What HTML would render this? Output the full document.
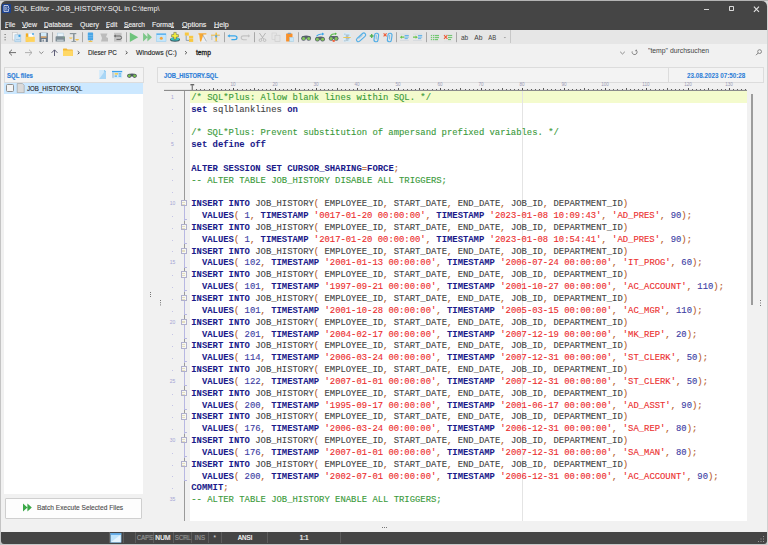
<!DOCTYPE html>
<html><head><meta charset="utf-8"><style>
*{margin:0;padding:0;box-sizing:border-box}
html,body{width:768px;height:545px;overflow:hidden}
body{position:relative;background:#f1f1f1;font-family:"Liberation Sans",sans-serif}
.a{position:absolute}
.dark{background:#454545}
.t{position:absolute;white-space:pre;line-height:10px}
.menu{position:absolute;top:19px;font-size:7.05px;color:#f0f0f0;white-space:pre;line-height:10px}
.menu u{text-decoration:none;border-bottom:0.8px solid #e8e8e8}
.ln{position:absolute;left:191.3px;height:11.84px;line-height:11.84px;font-family:"Liberation Mono",monospace;font-size:8.88px;color:#444444;white-space:pre;-webkit-text-stroke:0.12px currentColor}
.ln b{color:#1a1a8a;font-weight:bold;-webkit-text-stroke:0.05px currentColor}
.ln i{font-style:normal}
.ln .p{color:#b85c2c}
.ln .s{color:#ec2e2e}
.ln .n{color:#3e3ea4}
.ln .c{color:#3a9a3a}
.gn{position:absolute;left:163px;width:19px;text-align:center;height:11.84px;line-height:11.84px;font-size:5px;color:#a4a4d4}
.gd{position:absolute;left:172px;width:1px;height:1px;background:#c4c4e6}
.st{position:absolute;top:533px;font-size:6.3px;line-height:9px;white-space:pre;color:#8a8a8a}
.sep{position:absolute;top:532px;width:1px;height:11px;background:#5c5c5c}
</style></head><body>
<!-- outer frame -->
<div class="a" style="left:0;top:0;width:768px;height:545px;background:#d8d8d8"></div>
<div class="a" style="left:1px;top:1px;width:766px;height:544px;background:#f1f1f1;border-radius:5px 5px 0 0;overflow:hidden">
  <div class="a dark" style="left:0;top:0;width:766px;height:29px"></div>
</div>
<!-- title icon -->
<svg class="a" style="left:2px;top:4px" width="9" height="9" viewBox="0 0 9 9">
<rect x="0" y="0" width="9" height="9" rx="0.8" fill="#1b4190"/>
<path d="M2 1.5 H6 L6.4 2 V3.8 L7.3 4.5 L6.4 5.2 V7.4 H2Z" fill="none" stroke="#f4f6fb" stroke-width="0.75"/>
<path d="M3.3 3 H4.5 Q5.1 3 5.1 3.7 Q5.1 4.3 4.5 4.4 Q5.2 4.5 5.2 5.2 Q5.2 5.9 4.5 5.9 H3.3Z" fill="none" stroke="#dfe6f4" stroke-width="0.55"/>
</svg>
<div class="a" style="left:703.8px;top:8.8px;width:5px;height:1px;background:#d4d4d4"></div>
<div class="a" style="left:729.2px;top:6px;width:4.6px;height:5.4px;border:0.9px solid #dadada;border-radius:0.8px"></div>
<svg class="a" style="left:753px;top:5.5px" width="7" height="7" viewBox="0 0 7 7"><path d="M0.9 0.6 L6 5.9 M6 0.6 L0.9 5.9" stroke="#e4e4e4" stroke-width="1.1"/></svg>
<!-- toolbar -->
<div class="a" style="left:1px;top:30px;width:766px;height:14px;background:#e6e6e6"></div>
<svg class="a" style="left:0;top:28px" width="768" height="18" viewBox="0 28 768 18">
<g fill="#5a5a5a"><rect x="4.6" y="34" width="1" height="1"/><rect x="4.6" y="36.8" width="1" height="1"/><rect x="4.6" y="39.3" width="1" height="1"/></g>
<g fill="#a8a8a8"><rect x="52" y="32.2" width="1" height="10"/><rect x="82" y="32.2" width="1" height="10"/><rect x="126" y="32.2" width="1" height="10"/><rect x="224" y="32.2" width="1" height="10"/><rect x="254" y="32.2" width="1" height="10"/><rect x="298" y="32.2" width="1" height="10"/><rect x="396" y="32.2" width="1" height="10"/><rect x="426" y="32.2" width="1" height="10"/><rect x="456" y="32.2" width="1" height="10"/><rect x="510" y="30" width="1" height="13" fill="#c8c8c8"/></g>
<!-- copy doc -->
<rect x="12.6" y="32.6" width="4.6" height="7.4" fill="#f6f6f6" stroke="#c4c4c4" stroke-width="0.6"/>
<rect x="14.9" y="34.8" width="5.9" height="7" fill="#cde5f6" stroke="#98c2e2" stroke-width="0.6"/>
<circle cx="19.4" cy="35.9" r="1.1" fill="#3b9fe0"/>
<rect x="16" y="39.5" width="3.8" height="0.6" fill="#8ab4d4"/>
<!-- folder -->
<path d="M25.8 33.4 H28.4 V41.9 H25.8Z" fill="#f3ad22"/>
<rect x="28.6" y="33.3" width="4.9" height="4.6" fill="#fbfdff" stroke="#c8dcee" stroke-width="0.4"/>
<circle cx="33" cy="34" r="0.9" fill="#3b9fe0"/>
<path d="M25.8 36.8 H34.8 V41.9 H25.8Z" fill="#ffd35c"/>
<!-- disk -->
<rect x="39.5" y="32.8" width="8.4" height="9.1" rx="0.5" fill="#687888"/>
<rect x="40.9" y="32.8" width="5.6" height="3.8" fill="#d2eaf8"/>
<rect x="40.9" y="36.4" width="5.6" height="1.4" fill="#e3a867"/>
<rect x="41.6" y="39" width="4.2" height="2.9" fill="#e6e6e6"/>
<rect x="42.6" y="39.6" width="1.2" height="2" fill="#687888"/>
<!-- printer -->
<rect x="57.6" y="33.1" width="5.6" height="4" fill="#e8f4fb" stroke="#a8c8dc" stroke-width="0.5"/>
<path d="M55.6 37 Q55.6 36.3 56.4 36.3 H64.2 Q65 36.3 65 37 V41.6 H55.6Z" fill="#7d8c94"/>
<rect x="57" y="39.6" width="6.6" height="1.6" fill="#b8c4ca"/>
<rect x="63.6" y="37.2" width="0.8" height="0.8" fill="#7bc86c"/>
<!-- scales -->
<rect x="69.8" y="33" width="6.5" height="1.2" fill="#8a969c"/>
<rect x="73" y="33" width="1.6" height="8.6" fill="#8a969c"/>
<rect x="71.5" y="41" width="4.6" height="0.8" fill="#8a969c"/>
<path d="M69 37.4 H72.6 Q72.3 38.8 70.8 38.8 Q69.3 38.8 69 37.4Z" fill="#f2c24a"/>
<path d="M75.2 39 H79 Q78.7 40.5 77.1 40.5 Q75.5 40.5 75.2 39Z" fill="#f2c24a"/>
<!-- db -->
<rect x="87.8" y="32.5" width="5.3" height="7.7" rx="0.6" fill="#4aa6e6"/>
<rect x="88.2" y="35.2" width="4.5" height="0.5" fill="#8fcaf2"/>
<rect x="88.2" y="37.6" width="4.5" height="0.5" fill="#8fcaf2"/>
<rect x="90.2" y="40" width="0.6" height="1" fill="#999"/>
<rect x="88.6" y="40.8" width="3.8" height="1.2" fill="#f0c04a"/>
<!-- disabled 1 -->
<path d="M100.3 33.5 H107.5 L106 37 L108 38 V41.5 H101 L102 38 Z" fill="#bcbcbc"/>
<!-- disabled 2 -->
<rect x="114" y="32.8" width="7.6" height="8.8" fill="#c4c4c4"/>
<path d="M115.5 36 H120 Q121.6 36 121.6 37.6 Q121.6 39.4 120 39.4 H116.5" fill="none" stroke="#666" stroke-width="1"/>
<path d="M113.6 36 L115.8 34.6 V37.4Z" fill="#666"/>
<!-- play -->
<path d="M129.8 32.5 L138.2 37.2 L129.8 41.9Z" fill="#6ec47c"/>
<!-- double play -->
<path d="M143.1 32.8 L147.6 37.2 L143.1 41.6Z M147.4 32.8 L151.9 37.2 L147.4 41.6Z" fill="#7cc788"/>
<!-- window -->
<rect x="156.6" y="33.8" width="9.4" height="7.5" fill="#c4e6fb" stroke="#8ccaf2" stroke-width="0.5"/>
<rect x="156.6" y="33.6" width="9.4" height="1.2" fill="#4aa8ec"/>
<circle cx="161.3" cy="38.3" r="1.5" fill="#f6a43a"/>
<!-- teal + star -->
<ellipse cx="175" cy="39.6" rx="5" ry="2.2" fill="#3a5a60"/>
<ellipse cx="175" cy="39.1" rx="4.3" ry="1.5" fill="#36c4c8"/>
<path d="M173.8 32.4 H176.2 V34.6 H178.4 V37 H176.2 V39.2 H173.8 V37 H171.6 V34.6 H173.8Z" fill="#f4f040" stroke="#4a4a3a" stroke-width="0.45"/>
<!-- tree -->
<rect x="184.8" y="32.5" width="4" height="3.1" fill="#f8c840"/>
<path d="M186.2 35.6 V40.4 H189" fill="none" stroke="#8a9aa6" stroke-width="0.9"/>
<rect x="189" y="35.8" width="4.2" height="2.8" fill="#f8c840"/>
<rect x="189" y="39" width="4.2" height="2.9" fill="#f8c840"/>
<!-- orange doc -->
<rect x="198.4" y="33.2" width="8.2" height="8.8" fill="#eceff2"/>
<path d="M198.4 33.2 H206.4 V34.6 H203.4 L201.2 41.6 H200 L199.2 34.6 H198.4Z" fill="#f8a830"/>
<path d="M202.6 34.6 L206.4 41.4" stroke="#8c98a4" stroke-width="0.7"/>
<!-- crane -->
<rect x="215.4" y="32.6" width="1.6" height="9.2" fill="#f2c24a"/>
<rect x="211" y="34.7" width="8.8" height="1" fill="#e8b840"/>
<rect x="215.2" y="35.2" width="2" height="2.2" fill="#5aa8d8"/>
<rect x="211.6" y="36" width="0.6" height="4" fill="#9aa"/>
<rect x="213.8" y="41.2" width="4.6" height="0.7" fill="#ccc"/>
<!-- undo -->
<path d="M228.6 35.9 H234.6 Q237 35.9 237 37.8 Q237 39.7 234.6 39.7 H231.4" fill="none" stroke="#3aa8ea" stroke-width="1.2"/>
<path d="M227.4 35.9 L229.8 34.2 V37.6Z" fill="#3aa8ea"/>
<!-- redo -->
<path d="M249 35.9 H243.6 Q241.2 35.9 241.2 37.8 Q241.2 39.7 243.6 39.7 H246.8" fill="none" stroke="#c2c2c2" stroke-width="1.1"/>
<path d="M250.3 35.9 L248 34.2 V37.6Z" fill="#c2c2c2"/>
<!-- scissors -->
<path d="M259.4 33 L263.6 39 M265.6 33 L261.4 39" stroke="#b0b0b0" stroke-width="0.9"/>
<circle cx="260.4" cy="40.2" r="1.3" fill="none" stroke="#b0b0b0" stroke-width="0.7"/>
<circle cx="264.6" cy="40.2" r="1.3" fill="none" stroke="#b0b0b0" stroke-width="0.7"/>
<!-- copy disabled -->
<rect x="272" y="33" width="4.5" height="6.6" fill="none" stroke="#cfcfcf" stroke-width="0.6"/>
<rect x="275" y="35.2" width="5" height="6.4" fill="#e4e4e4" stroke="#c8c8c8" stroke-width="0.6"/>
<!-- paste -->
<rect x="286.1" y="33.6" width="6.4" height="8" rx="0.5" fill="#f8902a"/>
<rect x="287.6" y="32.8" width="3.4" height="1.3" rx="0.5" fill="#8aa0b0"/>
<rect x="289.6" y="37.2" width="4" height="4.6" fill="#cbe8f8" stroke="#9cc8e4" stroke-width="0.4"/>
<!-- binoculars -->
<path d="M302.4 36.2 Q306 34.6 310 36.2 L311 38.6 H301.2Z" fill="#58606a"/>
<circle cx="303.6" cy="38.4" r="2.3" fill="#56606a"/><circle cx="308.7" cy="38.4" r="2.3" fill="#56606a"/>
<circle cx="303.6" cy="38.4" r="1.5" fill="#84c85a"/><circle cx="308.7" cy="38.4" r="1.5" fill="#84c85a"/>
<!-- binoculars blue arrow -->
<path d="M316.2 37.2 L318.6 36.8 Q322.8 36.2 323.6 37.6 L325 39.6 H315Z" fill="#58606a"/>
<circle cx="317.4" cy="39.3" r="2.3" fill="#56606a"/><circle cx="322.6" cy="39.3" r="2.3" fill="#56606a"/>
<circle cx="317.4" cy="39.3" r="1.5" fill="#84c85a"/><circle cx="322.6" cy="39.3" r="1.5" fill="#84c85a"/>
<path d="M316.6 36.4 Q318 34 322.4 34" fill="none" stroke="#3aa6e8" stroke-width="1.1"/>
<path d="M324.4 34 L322 32.6 V35.4Z" fill="#3aa6e8"/>
<!-- binoculars green/red -->
<path d="M329.6 36.8 Q333.4 35.4 337.4 36.8 L338.2 39 H328.6Z" fill="#58606a"/>
<circle cx="331.2" cy="38.4" r="2.3" fill="#56606a"/><circle cx="336.2" cy="38.4" r="2.3" fill="#56606a"/>
<circle cx="331.2" cy="38.4" r="1.5" fill="#84c85a"/><circle cx="336.2" cy="38.4" r="1.5" fill="#84c85a"/>
<path d="M330.4 36 Q331.6 33.8 335.6 33.8" fill="none" stroke="#5cbb4c" stroke-width="1.1"/>
<path d="M337 33.8 L335 32.4 V35.2Z" fill="#5cbb4c"/>
<path d="M332 40.6 L335.4 40.6 L333.7 42Z" fill="#f0643c"/><rect x="332.6" y="40" width="2.2" height="1.6" fill="#f0643c"/>
<!-- doc yellow line -->
<rect x="343.3" y="32.8" width="7.4" height="9" fill="#d6ecf8"/>
<g fill="#6a7a8a"><rect x="344.4" y="33.8" width="1" height="0.6"/><rect x="345.8" y="34.8" width="3.6" height="0.5"/><rect x="345.8" y="35.9" width="2.6" height="0.5"/><rect x="345.8" y="38.6" width="3.6" height="0.5"/><rect x="345.8" y="39.8" width="2.6" height="0.5"/><rect x="344.4" y="40.6" width="1" height="0.6"/></g>
<rect x="343.3" y="37" width="7.4" height="0.9" fill="#f0c040"/>
<!-- paperclip -->
<rect x="355.6" y="35.5" width="11" height="3.8" rx="1.9" transform="rotate(-42 361 37.4)" fill="none" stroke="#52aee6" stroke-width="1.15"/>
<path d="M358.6 38.6 L362.6 35" stroke="#52aee6" stroke-width="0.7"/>
<!-- green + clip -->
<path d="M369.8 36 H373.6 M371.7 34 V38" stroke="#52b052" stroke-width="1.3"/>
<rect x="374.3" y="33.2" width="4" height="8.6" rx="2" transform="rotate(8 376.3 37.5)" fill="none" stroke="#52aee6" stroke-width="1.15"/>
<path d="M376.2 34.8 V39.4" stroke="#52aee6" stroke-width="0.7"/>
<!-- red x clip -->
<path d="M383.6 33.3 L386.6 36.3 M386.6 33.3 L383.6 36.3" stroke="#ec5a36" stroke-width="1.1"/>
<rect x="387.7" y="33.2" width="4" height="8.6" rx="2" transform="rotate(8 389.7 37.5)" fill="none" stroke="#52aee6" stroke-width="1.15"/>
<path d="M389.6 34.8 V39.4" stroke="#52aee6" stroke-width="0.7"/>
<!-- indent -->
<g fill="#c8d0d8"><rect x="400" y="33.8" width="8.8" height="0.5"/><rect x="400" y="40.4" width="8.8" height="0.5"/></g>
<path d="M399.8 37.2 L402 35.6 V36.6 H404.4 V37.8 H402 V38.8Z" fill="#6cc44c"/>
<g fill="#58b0ea"><rect x="404.6" y="35" width="4.2" height="0.9"/><rect x="404.6" y="36.6" width="4.2" height="0.9"/><rect x="404.6" y="38.2" width="3.2" height="0.9"/></g>
<!-- outdent -->
<g fill="#c8d0d8"><rect x="413" y="33.8" width="9" height="0.5"/><rect x="413" y="40.4" width="9" height="0.5"/></g>
<path d="M417.8 37.2 L415.6 35.6 V36.6 H413 V37.8 H415.6 V38.8Z" fill="#6cc44c"/>
<g fill="#58b0ea"><rect x="418" y="35" width="4.2" height="0.9"/><rect x="418" y="36.6" width="4.2" height="0.9"/><rect x="418" y="38.2" width="3.2" height="0.9"/></g>
<!-- green list -->
<g fill="#72c872"><rect x="430.8" y="35" width="1.4" height="1.2"/><rect x="433" y="35" width="1.4" height="1.2"/><rect x="435" y="35" width="4" height="1.2"/><rect x="430.8" y="37" width="1.4" height="1.2"/><rect x="433" y="37" width="1.4" height="1.2"/><rect x="435" y="37" width="4" height="1.2"/><rect x="430.8" y="39" width="1.4" height="1.2"/><rect x="433" y="39" width="1.4" height="1.2"/><rect x="435" y="39" width="3" height="1.2"/></g>
<g fill="#d0d4d8"><rect x="430.8" y="34" width="8.3" height="0.4"/><rect x="430.8" y="40.8" width="8.3" height="0.4"/></g>
<!-- red x list -->
<path d="M444 35.2 L447.4 38.8 M447.4 35.2 L444 38.8" stroke="#ec5a36" stroke-width="1.1"/>
<g fill="#72c872"><rect x="448" y="35" width="4.2" height="1.1"/><rect x="448" y="37" width="4.2" height="1.1"/><rect x="448" y="39" width="3" height="1.1"/></g>
<g fill="#d0d4d8"><rect x="443.8" y="34" width="8.4" height="0.4"/><rect x="443.8" y="40.8" width="8.4" height="0.4"/></g>
<!-- ab Ab AB -->
<g font-family="Liberation Sans" font-size="7.2" fill="#404040">
<text x="460.9" y="39.5" textLength="7.2" lengthAdjust="spacingAndGlyphs">ab</text>
<text x="474.3" y="39.5" textLength="8.2" lengthAdjust="spacingAndGlyphs">Ab</text>
<text x="488.3" y="39.5" textLength="7.9" lengthAdjust="spacingAndGlyphs">AB</text>
</g>
<path d="M503.7 37 H506.1 L504.9 38.2Z" fill="#9a9a9a"/>
</svg>

<!-- address bar -->
<svg class="a" style="left:0;top:44px" width="230" height="18" viewBox="0 44 230 18">
<path d="M9 52.6 H16 M12 49.7 L9 52.6 L12 55.5" fill="none" stroke="#5c5c5c" stroke-width="0.9"/>
<path d="M32 52.6 H25 M29 49.7 L32 52.6 L29 55.5" fill="none" stroke="#a8a8a8" stroke-width="0.9"/>
<path d="M39.2 51.6 L41.3 53.6 L43.4 51.6" fill="none" stroke="#707070" stroke-width="0.8"/>
<path d="M54.5 56 V50 M51.6 52.8 L54.5 49.8 L57.4 52.8" fill="none" stroke="#4e4e6a" stroke-width="0.9"/>
<path d="M63 49 Q63 48.4 63.6 48.4 H66.6 L67.6 49.4 H72.2 Q72.8 49.4 72.8 50 V55.4 Q72.8 56 72.2 56 H63.6 Q63 56 63 55.4Z" fill="#f2b632"/>
<path d="M63 50.6 H72.8 V55.4 Q72.8 56 72.2 56 H63.6 Q63 56 63 55.4Z" fill="#ffd866"/>
<path d="M77.7 51.2 L79.4 52.7 L77.7 54.2" fill="none" stroke="#555" stroke-width="1"/>
<path d="M125.7 51.2 L127.4 52.7 L125.7 54.2" fill="none" stroke="#555" stroke-width="1"/>
<path d="M185.1 51.2 L186.8 52.7 L185.1 54.2" fill="none" stroke="#555" stroke-width="1"/>
</svg>
<svg class="a" style="left:615px;top:44px" width="153" height="18" viewBox="615 44 153 18">
<path d="M620.2 51.8 L622.5 54 L624.8 51.8" fill="none" stroke="#707070" stroke-width="0.8"/>
<path d="M636.6 50.6 A2.5 2.5 0 1 1 632.2 51.4" fill="none" stroke="#707070" stroke-width="0.8"/>
<path d="M636.2 49.2 L637 51 L635 51.2Z" fill="#707070"/>
<circle cx="759.6" cy="51.6" r="1.9" fill="none" stroke="#707070" stroke-width="0.8"/>
<path d="M758.2 53 L756 55.2" stroke="#707070" stroke-width="0.9"/>
</svg>
<!-- left panel -->
<div class="a" style="left:4px;top:67px;width:140px;height:16px;background:#f3f3f3;border:1px solid #dcdcdc"></div>
<svg class="a" style="left:96px;top:68px" width="46" height="13" viewBox="96 68 46 13">
<path d="M99.2 70 H104.4 L106 71.6 V79 H99.2Z" fill="#d2eafb"/>
<path d="M99.2 79 L104.6 71.6 H106 V79Z" fill="#a8d6f6"/>
<path d="M104.4 70 L106 71.6 H104.4Z" fill="#4aa6e6"/>
<rect x="112" y="71" width="10.2" height="7.3" fill="#d4ecfb"/>
<rect x="112" y="70.9" width="10.2" height="1.3" fill="#3ea2ea"/>
<rect x="114.6" y="73.2" width="3.4" height="1.4" fill="#f6c83c"/>
<rect x="118.6" y="73.2" width="2.6" height="1.4" fill="#60b4ee"/>
<rect x="114.6" y="75.4" width="2.4" height="1.4" fill="#60b4ee"/><rect x="118.6" y="75.4" width="2.6" height="1.4" fill="#60b4ee"/>
<rect x="112.6" y="72.6" width="0.8" height="5.2" fill="#9aa8b4"/>
<path d="M128 74.6 Q132 72.4 136 74.6 L136.8 76.4 H127.2Z" fill="#4e5864"/>
<circle cx="129.3" cy="75.8" r="2.1" fill="#4e5864"/><circle cx="134.6" cy="75.8" r="2.1" fill="#4e5864"/>
<circle cx="129.3" cy="75.8" r="1.4" fill="#78c24c"/><circle cx="134.6" cy="75.8" r="1.4" fill="#78c24c"/>
</svg>
<div class="a" style="left:4px;top:83px;width:139px;height:411px;background:#fff"></div>
<div class="a" style="left:4px;top:83px;width:139px;height:11px;background:#cce8ff"></div>
<div class="a" style="left:6.3px;top:84.2px;width:7.5px;height:7.4px;background:#f4f4f4;border:1px solid #8e8e8e;border-radius:1.5px"></div>
<svg class="a" style="left:16px;top:83px" width="9" height="10" viewBox="16 83 9 10">
<path d="M17.2 83.5 H22.4 L24.2 85.3 V92.7 H17.2Z" fill="#dadada" stroke="#9a9a9a" stroke-width="0.6"/>
</svg>
<div class="a" style="left:4.8px;top:497.8px;width:137.2px;height:20.8px;background:#fdfdfd;border:1px solid #cfcfcf;border-radius:1px"></div>
<svg class="a" style="left:22px;top:502px" width="11" height="11" viewBox="22 502 11 11">
<path d="M23 503.4 L27.4 507.5 L23 511.6Z M27.4 503.4 L31.8 507.5 L27.4 511.6Z" fill="#3aa848"/>
</svg>
<!-- splitter grips -->
<div class="a" style="left:149.5px;top:291.5px;width:1px;height:1px;background:#777;box-shadow:0 2px #777,0 4px #777"></div>
<div class="a" style="left:160px;top:299.5px;width:1px;height:1px;background:#777;box-shadow:0 2.2px #777,0 4.4px #777"></div>
<!-- editor header -->
<div class="a" style="left:156.6px;top:67px;width:607.4px;height:16px;background:#f3f3f3;border:1px solid #dcdcdc"></div>
<div class="a" style="left:668px;top:67px;width:1px;height:16px;background:#dcdcdc"></div>
<!-- ruler -->
<div class="a" style="left:164px;top:90px;width:583px;height:1px;background:#8c8c8c"></div>
<div class="a" style="left:164px;top:89px;width:583px;height:1px;background:#e4e4e4"></div>
<div class="a" style="left:195.5px;top:88.8px;width:1px;height:1.3px;background:#606060"></div>
<div class="a" style="left:199.5px;top:88.8px;width:1px;height:1.3px;background:#606060"></div>
<div class="a" style="left:203.5px;top:88.8px;width:1px;height:1.3px;background:#606060"></div>
<div class="a" style="left:208.5px;top:88.8px;width:1px;height:1.3px;background:#606060"></div>
<div class="a" style="left:212.5px;top:87.8px;width:1px;height:2.3px;background:#606060"></div>
<div class="a" style="left:216.5px;top:88.8px;width:1px;height:1.3px;background:#606060"></div>
<div class="a" style="left:220.5px;top:88.8px;width:1px;height:1.3px;background:#606060"></div>
<div class="a" style="left:224.5px;top:88.8px;width:1px;height:1.3px;background:#606060"></div>
<div class="a" style="left:228.5px;top:88.8px;width:1px;height:1.3px;background:#606060"></div>
<div class="a" style="left:232.5px;top:87.6px;width:1px;height:2.5px;background:#505050"></div>
<div class="t" style="left:224.5px;top:82.2px;width:17px;text-align:center;font-size:4.6px;line-height:6px;color:#9a9ab4">10</div>
<div class="a" style="left:236.5px;top:88.8px;width:1px;height:1.3px;background:#606060"></div>
<div class="a" style="left:241.5px;top:88.8px;width:1px;height:1.3px;background:#606060"></div>
<div class="a" style="left:245.5px;top:88.8px;width:1px;height:1.3px;background:#606060"></div>
<div class="a" style="left:249.5px;top:88.8px;width:1px;height:1.3px;background:#606060"></div>
<div class="a" style="left:253.5px;top:87.8px;width:1px;height:2.3px;background:#606060"></div>
<div class="a" style="left:257.5px;top:88.8px;width:1px;height:1.3px;background:#606060"></div>
<div class="a" style="left:261.5px;top:88.8px;width:1px;height:1.3px;background:#606060"></div>
<div class="a" style="left:265.5px;top:88.8px;width:1px;height:1.3px;background:#606060"></div>
<div class="a" style="left:269.5px;top:88.8px;width:1px;height:1.3px;background:#606060"></div>
<div class="a" style="left:274.5px;top:87.6px;width:1px;height:2.5px;background:#505050"></div>
<div class="t" style="left:266.5px;top:82.2px;width:17px;text-align:center;font-size:4.6px;line-height:6px;color:#9a9ab4">20</div>
<div class="a" style="left:278.5px;top:88.8px;width:1px;height:1.3px;background:#606060"></div>
<div class="a" style="left:282.5px;top:88.8px;width:1px;height:1.3px;background:#606060"></div>
<div class="a" style="left:286.5px;top:88.8px;width:1px;height:1.3px;background:#606060"></div>
<div class="a" style="left:290.5px;top:88.8px;width:1px;height:1.3px;background:#606060"></div>
<div class="a" style="left:294.5px;top:87.8px;width:1px;height:2.3px;background:#606060"></div>
<div class="a" style="left:298.5px;top:88.8px;width:1px;height:1.3px;background:#606060"></div>
<div class="a" style="left:303.5px;top:88.8px;width:1px;height:1.3px;background:#606060"></div>
<div class="a" style="left:307.5px;top:88.8px;width:1px;height:1.3px;background:#606060"></div>
<div class="a" style="left:311.5px;top:88.8px;width:1px;height:1.3px;background:#606060"></div>
<div class="a" style="left:315.5px;top:87.6px;width:1px;height:2.5px;background:#505050"></div>
<div class="t" style="left:307.5px;top:82.2px;width:17px;text-align:center;font-size:4.6px;line-height:6px;color:#9a9ab4">30</div>
<div class="a" style="left:319.5px;top:88.8px;width:1px;height:1.3px;background:#606060"></div>
<div class="a" style="left:323.5px;top:88.8px;width:1px;height:1.3px;background:#606060"></div>
<div class="a" style="left:327.5px;top:88.8px;width:1px;height:1.3px;background:#606060"></div>
<div class="a" style="left:331.5px;top:88.8px;width:1px;height:1.3px;background:#606060"></div>
<div class="a" style="left:336.5px;top:87.8px;width:1px;height:2.3px;background:#606060"></div>
<div class="a" style="left:340.5px;top:88.8px;width:1px;height:1.3px;background:#606060"></div>
<div class="a" style="left:344.5px;top:88.8px;width:1px;height:1.3px;background:#606060"></div>
<div class="a" style="left:348.5px;top:88.8px;width:1px;height:1.3px;background:#606060"></div>
<div class="a" style="left:352.5px;top:88.8px;width:1px;height:1.3px;background:#606060"></div>
<div class="a" style="left:356.5px;top:87.6px;width:1px;height:2.5px;background:#505050"></div>
<div class="t" style="left:348.5px;top:82.2px;width:17px;text-align:center;font-size:4.6px;line-height:6px;color:#9a9ab4">40</div>
<div class="a" style="left:360.5px;top:88.8px;width:1px;height:1.3px;background:#606060"></div>
<div class="a" style="left:364.5px;top:88.8px;width:1px;height:1.3px;background:#606060"></div>
<div class="a" style="left:369.5px;top:88.8px;width:1px;height:1.3px;background:#606060"></div>
<div class="a" style="left:373.5px;top:88.8px;width:1px;height:1.3px;background:#606060"></div>
<div class="a" style="left:377.5px;top:87.8px;width:1px;height:2.3px;background:#606060"></div>
<div class="a" style="left:381.5px;top:88.8px;width:1px;height:1.3px;background:#606060"></div>
<div class="a" style="left:385.5px;top:88.8px;width:1px;height:1.3px;background:#606060"></div>
<div class="a" style="left:389.5px;top:88.8px;width:1px;height:1.3px;background:#606060"></div>
<div class="a" style="left:393.5px;top:88.8px;width:1px;height:1.3px;background:#606060"></div>
<div class="a" style="left:397.5px;top:87.6px;width:1px;height:2.5px;background:#505050"></div>
<div class="t" style="left:389.5px;top:82.2px;width:17px;text-align:center;font-size:4.6px;line-height:6px;color:#9a9ab4">50</div>
<div class="a" style="left:402.5px;top:88.8px;width:1px;height:1.3px;background:#606060"></div>
<div class="a" style="left:406.5px;top:88.8px;width:1px;height:1.3px;background:#606060"></div>
<div class="a" style="left:410.5px;top:88.8px;width:1px;height:1.3px;background:#606060"></div>
<div class="a" style="left:414.5px;top:88.8px;width:1px;height:1.3px;background:#606060"></div>
<div class="a" style="left:418.5px;top:87.8px;width:1px;height:2.3px;background:#606060"></div>
<div class="a" style="left:422.5px;top:88.8px;width:1px;height:1.3px;background:#606060"></div>
<div class="a" style="left:426.5px;top:88.8px;width:1px;height:1.3px;background:#606060"></div>
<div class="a" style="left:431.5px;top:88.8px;width:1px;height:1.3px;background:#606060"></div>
<div class="a" style="left:435.5px;top:88.8px;width:1px;height:1.3px;background:#606060"></div>
<div class="a" style="left:439.5px;top:87.6px;width:1px;height:2.5px;background:#505050"></div>
<div class="t" style="left:431.5px;top:82.2px;width:17px;text-align:center;font-size:4.6px;line-height:6px;color:#9a9ab4">60</div>
<div class="a" style="left:443.5px;top:88.8px;width:1px;height:1.3px;background:#606060"></div>
<div class="a" style="left:447.5px;top:88.8px;width:1px;height:1.3px;background:#606060"></div>
<div class="a" style="left:451.5px;top:88.8px;width:1px;height:1.3px;background:#606060"></div>
<div class="a" style="left:455.5px;top:88.8px;width:1px;height:1.3px;background:#606060"></div>
<div class="a" style="left:459.5px;top:87.8px;width:1px;height:2.3px;background:#606060"></div>
<div class="a" style="left:464.5px;top:88.8px;width:1px;height:1.3px;background:#606060"></div>
<div class="a" style="left:468.5px;top:88.8px;width:1px;height:1.3px;background:#606060"></div>
<div class="a" style="left:472.5px;top:88.8px;width:1px;height:1.3px;background:#606060"></div>
<div class="a" style="left:476.5px;top:88.8px;width:1px;height:1.3px;background:#606060"></div>
<div class="a" style="left:480.5px;top:87.6px;width:1px;height:2.5px;background:#505050"></div>
<div class="t" style="left:472.5px;top:82.2px;width:17px;text-align:center;font-size:4.6px;line-height:6px;color:#9a9ab4">70</div>
<div class="a" style="left:484.5px;top:88.8px;width:1px;height:1.3px;background:#606060"></div>
<div class="a" style="left:488.5px;top:88.8px;width:1px;height:1.3px;background:#606060"></div>
<div class="a" style="left:492.5px;top:88.8px;width:1px;height:1.3px;background:#606060"></div>
<div class="a" style="left:497.5px;top:88.8px;width:1px;height:1.3px;background:#606060"></div>
<div class="a" style="left:501.5px;top:87.8px;width:1px;height:2.3px;background:#606060"></div>
<div class="a" style="left:505.5px;top:88.8px;width:1px;height:1.3px;background:#606060"></div>
<div class="a" style="left:509.5px;top:88.8px;width:1px;height:1.3px;background:#606060"></div>
<div class="a" style="left:513.5px;top:88.8px;width:1px;height:1.3px;background:#606060"></div>
<div class="a" style="left:517.5px;top:88.8px;width:1px;height:1.3px;background:#606060"></div>
<div class="a" style="left:521.5px;top:87.6px;width:1px;height:2.5px;background:#505050"></div>
<div class="t" style="left:513.5px;top:82.2px;width:17px;text-align:center;font-size:4.6px;line-height:6px;color:#9a9ab4">80</div>
<div class="a" style="left:526.5px;top:88.8px;width:1px;height:1.3px;background:#606060"></div>
<div class="a" style="left:530.5px;top:88.8px;width:1px;height:1.3px;background:#606060"></div>
<div class="a" style="left:534.5px;top:88.8px;width:1px;height:1.3px;background:#606060"></div>
<div class="a" style="left:538.5px;top:88.8px;width:1px;height:1.3px;background:#606060"></div>
<div class="a" style="left:542.5px;top:87.8px;width:1px;height:2.3px;background:#606060"></div>
<div class="a" style="left:546.5px;top:88.8px;width:1px;height:1.3px;background:#606060"></div>
<div class="a" style="left:550.5px;top:88.8px;width:1px;height:1.3px;background:#606060"></div>
<div class="a" style="left:554.5px;top:88.8px;width:1px;height:1.3px;background:#606060"></div>
<div class="a" style="left:559.5px;top:88.8px;width:1px;height:1.3px;background:#606060"></div>
<div class="a" style="left:563.5px;top:87.6px;width:1px;height:2.5px;background:#505050"></div>
<div class="t" style="left:555.5px;top:82.2px;width:17px;text-align:center;font-size:4.6px;line-height:6px;color:#9a9ab4">90</div>
<div class="a" style="left:567.5px;top:88.8px;width:1px;height:1.3px;background:#606060"></div>
<div class="a" style="left:571.5px;top:88.8px;width:1px;height:1.3px;background:#606060"></div>
<div class="a" style="left:575.5px;top:88.8px;width:1px;height:1.3px;background:#606060"></div>
<div class="a" style="left:579.5px;top:88.8px;width:1px;height:1.3px;background:#606060"></div>
<div class="a" style="left:583.5px;top:87.8px;width:1px;height:2.3px;background:#606060"></div>
<div class="a" style="left:587.5px;top:88.8px;width:1px;height:1.3px;background:#606060"></div>
<div class="a" style="left:592.5px;top:88.8px;width:1px;height:1.3px;background:#606060"></div>
<div class="a" style="left:596.5px;top:88.8px;width:1px;height:1.3px;background:#606060"></div>
<div class="a" style="left:600.5px;top:88.8px;width:1px;height:1.3px;background:#606060"></div>
<div class="a" style="left:604.5px;top:87.6px;width:1px;height:2.5px;background:#505050"></div>
<div class="t" style="left:596.5px;top:82.2px;width:17px;text-align:center;font-size:4.6px;line-height:6px;color:#9a9ab4">100</div>
<div class="a" style="left:608.5px;top:88.8px;width:1px;height:1.3px;background:#606060"></div>
<div class="a" style="left:612.5px;top:88.8px;width:1px;height:1.3px;background:#606060"></div>
<div class="a" style="left:616.5px;top:88.8px;width:1px;height:1.3px;background:#606060"></div>
<div class="a" style="left:621.5px;top:88.8px;width:1px;height:1.3px;background:#606060"></div>
<div class="a" style="left:625.5px;top:87.8px;width:1px;height:2.3px;background:#606060"></div>
<div class="a" style="left:629.5px;top:88.8px;width:1px;height:1.3px;background:#606060"></div>
<div class="a" style="left:633.5px;top:88.8px;width:1px;height:1.3px;background:#606060"></div>
<div class="a" style="left:637.5px;top:88.8px;width:1px;height:1.3px;background:#606060"></div>
<div class="a" style="left:641.5px;top:88.8px;width:1px;height:1.3px;background:#606060"></div>
<div class="a" style="left:645.5px;top:87.6px;width:1px;height:2.5px;background:#505050"></div>
<div class="t" style="left:637.5px;top:82.2px;width:17px;text-align:center;font-size:4.6px;line-height:6px;color:#9a9ab4">110</div>
<div class="a" style="left:649.5px;top:88.8px;width:1px;height:1.3px;background:#606060"></div>
<div class="a" style="left:654.5px;top:88.8px;width:1px;height:1.3px;background:#606060"></div>
<div class="a" style="left:658.5px;top:88.8px;width:1px;height:1.3px;background:#606060"></div>
<div class="a" style="left:662.5px;top:88.8px;width:1px;height:1.3px;background:#606060"></div>
<div class="a" style="left:666.5px;top:87.8px;width:1px;height:2.3px;background:#606060"></div>
<div class="a" style="left:670.5px;top:88.8px;width:1px;height:1.3px;background:#606060"></div>
<div class="a" style="left:674.5px;top:88.8px;width:1px;height:1.3px;background:#606060"></div>
<div class="a" style="left:678.5px;top:88.8px;width:1px;height:1.3px;background:#606060"></div>
<div class="a" style="left:682.5px;top:88.8px;width:1px;height:1.3px;background:#606060"></div>
<div class="a" style="left:687.5px;top:87.6px;width:1px;height:2.5px;background:#505050"></div>
<div class="t" style="left:679.5px;top:82.2px;width:17px;text-align:center;font-size:4.6px;line-height:6px;color:#9a9ab4">120</div>
<div class="a" style="left:691.5px;top:88.8px;width:1px;height:1.3px;background:#606060"></div>
<div class="a" style="left:695.5px;top:88.8px;width:1px;height:1.3px;background:#606060"></div>
<div class="a" style="left:699.5px;top:88.8px;width:1px;height:1.3px;background:#606060"></div>
<div class="a" style="left:703.5px;top:88.8px;width:1px;height:1.3px;background:#606060"></div>
<div class="a" style="left:707.5px;top:87.8px;width:1px;height:2.3px;background:#606060"></div>
<div class="a" style="left:711.5px;top:88.8px;width:1px;height:1.3px;background:#606060"></div>
<div class="a" style="left:716.5px;top:88.8px;width:1px;height:1.3px;background:#606060"></div>
<div class="a" style="left:720.5px;top:88.8px;width:1px;height:1.3px;background:#606060"></div>
<div class="a" style="left:724.5px;top:88.8px;width:1px;height:1.3px;background:#606060"></div>
<div class="a" style="left:728.5px;top:87.6px;width:1px;height:2.5px;background:#505050"></div>
<div class="t" style="left:720.5px;top:82.2px;width:17px;text-align:center;font-size:4.6px;line-height:6px;color:#9a9ab4">130</div>
<div class="a" style="left:732.5px;top:88.8px;width:1px;height:1.3px;background:#606060"></div>
<div class="a" style="left:736.5px;top:88.8px;width:1px;height:1.3px;background:#606060"></div>
<div class="a" style="left:740.5px;top:88.8px;width:1px;height:1.3px;background:#606060"></div>
<div class="a" style="left:744.5px;top:88.8px;width:1px;height:1.3px;background:#606060"></div>
<svg class="a" style="left:189.5px;top:84px" width="5" height="6" viewBox="0 0 5 6"><path d="M0.4 0.3 H4.2 V1.3 H0.4Z" fill="#2a2a2a"/><path d="M1.7 1.3 H2.8 V6 H1.7Z" fill="#6a6a6a"/></svg>
<!-- code area -->
<div class="a" style="left:190px;top:91px;width:557px;height:430px;background:#fff"></div>
<div class="a" style="left:190px;top:91px;width:557px;height:12px;background:#f4fbcd"></div>
<div class="a" style="left:522px;top:91px;width:1px;height:430px;background:#e4e4e4"></div>
<div class="a" style="left:184px;top:91px;width:1px;height:430px;background:#9a9a9a"></div>
<div class="a" style="left:183.6px;top:206.48px;width:1.8px;height:14.26px;background:#b8b8e2"></div>
<div class="a" style="left:184.6px;top:219.34px;width:2px;height:1px;background:#b8b8e2"></div>
<div class="a" style="left:181px;top:200.28px;width:5.6px;height:6.2px;background:#f8f8f2;border:0.9px solid #b0b0cc"></div>
<div class="a" style="left:182.3px;top:202.18px;width:3px;height:0.7px;background:#e2dcc0"></div>
<div class="a" style="left:182.3px;top:204.08px;width:3px;height:0.7px;background:#e2dcc0"></div>
<div class="a" style="left:183.6px;top:230.16px;width:1.8px;height:14.26px;background:#b8b8e2"></div>
<div class="a" style="left:184.6px;top:243.02px;width:2px;height:1px;background:#b8b8e2"></div>
<div class="a" style="left:181px;top:223.96px;width:5.6px;height:6.2px;background:#f8f8f2;border:0.9px solid #b0b0cc"></div>
<div class="a" style="left:182.3px;top:225.86px;width:3px;height:0.7px;background:#e2dcc0"></div>
<div class="a" style="left:182.3px;top:227.76px;width:3px;height:0.7px;background:#e2dcc0"></div>
<div class="a" style="left:183.6px;top:253.84px;width:1.8px;height:14.26px;background:#b8b8e2"></div>
<div class="a" style="left:184.6px;top:266.70px;width:2px;height:1px;background:#b8b8e2"></div>
<div class="a" style="left:181px;top:247.64px;width:5.6px;height:6.2px;background:#f8f8f2;border:0.9px solid #b0b0cc"></div>
<div class="a" style="left:182.3px;top:249.54px;width:3px;height:0.7px;background:#e2dcc0"></div>
<div class="a" style="left:182.3px;top:251.44px;width:3px;height:0.7px;background:#e2dcc0"></div>
<div class="a" style="left:183.6px;top:277.52px;width:1.8px;height:14.26px;background:#b8b8e2"></div>
<div class="a" style="left:184.6px;top:290.38px;width:2px;height:1px;background:#b8b8e2"></div>
<div class="a" style="left:181px;top:271.32px;width:5.6px;height:6.2px;background:#f8f8f2;border:0.9px solid #b0b0cc"></div>
<div class="a" style="left:182.3px;top:273.22px;width:3px;height:0.7px;background:#e2dcc0"></div>
<div class="a" style="left:182.3px;top:275.12px;width:3px;height:0.7px;background:#e2dcc0"></div>
<div class="a" style="left:183.6px;top:301.20px;width:1.8px;height:14.26px;background:#b8b8e2"></div>
<div class="a" style="left:184.6px;top:314.06px;width:2px;height:1px;background:#b8b8e2"></div>
<div class="a" style="left:181px;top:295.00px;width:5.6px;height:6.2px;background:#f8f8f2;border:0.9px solid #b0b0cc"></div>
<div class="a" style="left:182.3px;top:296.90px;width:3px;height:0.7px;background:#e2dcc0"></div>
<div class="a" style="left:182.3px;top:298.80px;width:3px;height:0.7px;background:#e2dcc0"></div>
<div class="a" style="left:183.6px;top:324.88px;width:1.8px;height:14.26px;background:#b8b8e2"></div>
<div class="a" style="left:184.6px;top:337.74px;width:2px;height:1px;background:#b8b8e2"></div>
<div class="a" style="left:181px;top:318.68px;width:5.6px;height:6.2px;background:#f8f8f2;border:0.9px solid #b0b0cc"></div>
<div class="a" style="left:182.3px;top:320.58px;width:3px;height:0.7px;background:#e2dcc0"></div>
<div class="a" style="left:182.3px;top:322.48px;width:3px;height:0.7px;background:#e2dcc0"></div>
<div class="a" style="left:183.6px;top:348.56px;width:1.8px;height:14.26px;background:#b8b8e2"></div>
<div class="a" style="left:184.6px;top:361.42px;width:2px;height:1px;background:#b8b8e2"></div>
<div class="a" style="left:181px;top:342.36px;width:5.6px;height:6.2px;background:#f8f8f2;border:0.9px solid #b0b0cc"></div>
<div class="a" style="left:182.3px;top:344.26px;width:3px;height:0.7px;background:#e2dcc0"></div>
<div class="a" style="left:182.3px;top:346.16px;width:3px;height:0.7px;background:#e2dcc0"></div>
<div class="a" style="left:183.6px;top:372.24px;width:1.8px;height:14.26px;background:#b8b8e2"></div>
<div class="a" style="left:184.6px;top:385.10px;width:2px;height:1px;background:#b8b8e2"></div>
<div class="a" style="left:181px;top:366.04px;width:5.6px;height:6.2px;background:#f8f8f2;border:0.9px solid #b0b0cc"></div>
<div class="a" style="left:182.3px;top:367.94px;width:3px;height:0.7px;background:#e2dcc0"></div>
<div class="a" style="left:182.3px;top:369.84px;width:3px;height:0.7px;background:#e2dcc0"></div>
<div class="a" style="left:183.6px;top:395.92px;width:1.8px;height:14.26px;background:#b8b8e2"></div>
<div class="a" style="left:184.6px;top:408.78px;width:2px;height:1px;background:#b8b8e2"></div>
<div class="a" style="left:181px;top:389.72px;width:5.6px;height:6.2px;background:#f8f8f2;border:0.9px solid #b0b0cc"></div>
<div class="a" style="left:182.3px;top:391.62px;width:3px;height:0.7px;background:#e2dcc0"></div>
<div class="a" style="left:182.3px;top:393.52px;width:3px;height:0.7px;background:#e2dcc0"></div>
<div class="a" style="left:183.6px;top:419.60px;width:1.8px;height:14.26px;background:#b8b8e2"></div>
<div class="a" style="left:184.6px;top:432.46px;width:2px;height:1px;background:#b8b8e2"></div>
<div class="a" style="left:181px;top:413.40px;width:5.6px;height:6.2px;background:#f8f8f2;border:0.9px solid #b0b0cc"></div>
<div class="a" style="left:182.3px;top:415.30px;width:3px;height:0.7px;background:#e2dcc0"></div>
<div class="a" style="left:182.3px;top:417.20px;width:3px;height:0.7px;background:#e2dcc0"></div>
<div class="a" style="left:183.6px;top:443.28px;width:1.8px;height:14.26px;background:#b8b8e2"></div>
<div class="a" style="left:184.6px;top:456.14px;width:2px;height:1px;background:#b8b8e2"></div>
<div class="a" style="left:181px;top:437.08px;width:5.6px;height:6.2px;background:#f8f8f2;border:0.9px solid #b0b0cc"></div>
<div class="a" style="left:182.3px;top:438.98px;width:3px;height:0.7px;background:#e2dcc0"></div>
<div class="a" style="left:182.3px;top:440.88px;width:3px;height:0.7px;background:#e2dcc0"></div>
<div class="a" style="left:183.6px;top:466.96px;width:1.8px;height:14.26px;background:#b8b8e2"></div>
<div class="a" style="left:184.6px;top:479.82px;width:2px;height:1px;background:#b8b8e2"></div>
<div class="a" style="left:181px;top:460.76px;width:5.6px;height:6.2px;background:#f8f8f2;border:0.9px solid #b0b0cc"></div>
<div class="a" style="left:182.3px;top:462.66px;width:3px;height:0.7px;background:#e2dcc0"></div>
<div class="a" style="left:182.3px;top:464.56px;width:3px;height:0.7px;background:#e2dcc0"></div>
<div class="a" style="left:751px;top:94px;width:2.2px;height:211px;background:#9c9c9c"></div>
<div class="a" style="left:760px;top:300px;width:1px;height:1px;background:#777;box-shadow:0 2.5px #777,0 5px #777"></div>
<div class="gn" style="top:91.60px">1</div>
<div class="gd" style="top:109.34px"></div>
<div class="gd" style="top:121.18px"></div>
<div class="gd" style="top:133.02px"></div>
<div class="gn" style="top:138.96px">5</div>
<div class="gd" style="top:156.70px"></div>
<div class="gd" style="top:168.54px"></div>
<div class="gd" style="top:180.38px"></div>
<div class="gd" style="top:192.22px"></div>
<div class="gn" style="top:198.16px">10</div>
<div class="gd" style="top:215.90px"></div>
<div class="gd" style="top:227.74px"></div>
<div class="gd" style="top:239.58px"></div>
<div class="gd" style="top:251.42px"></div>
<div class="gn" style="top:257.36px">15</div>
<div class="gd" style="top:275.10px"></div>
<div class="gd" style="top:286.94px"></div>
<div class="gd" style="top:298.78px"></div>
<div class="gd" style="top:310.62px"></div>
<div class="gn" style="top:316.56px">20</div>
<div class="gd" style="top:334.30px"></div>
<div class="gd" style="top:346.14px"></div>
<div class="gd" style="top:357.98px"></div>
<div class="gd" style="top:369.82px"></div>
<div class="gn" style="top:375.76px">25</div>
<div class="gd" style="top:393.50px"></div>
<div class="gd" style="top:405.34px"></div>
<div class="gd" style="top:417.18px"></div>
<div class="gd" style="top:429.02px"></div>
<div class="gn" style="top:434.96px">30</div>
<div class="gd" style="top:452.70px"></div>
<div class="gd" style="top:464.54px"></div>
<div class="gd" style="top:476.38px"></div>
<div class="gd" style="top:488.22px"></div>
<div class="gn" style="top:494.16px">35</div>
<div class="ln" style="top:92.70px"><i class="c">/* SQL*Plus: Allow blank lines within SQL. */</i></div>
<div class="ln" style="top:104.54px"><b>set</b> sqlblanklines <b>on</b></div>
<div class="ln" style="top:116.38px"></div>
<div class="ln" style="top:128.22px"><i class="c">/* SQL*Plus: Prevent substitution of ampersand prefixed variables. */</i></div>
<div class="ln" style="top:140.06px"><b>set</b> <b>define</b> <b>off</b></div>
<div class="ln" style="top:151.90px"></div>
<div class="ln" style="top:163.74px"><b>ALTER</b> <b>SESSION</b> <b>SET</b> <b>CURSOR_SHARING</b><i class="p">=</i><b>FORCE</b><i class="p">;</i></div>
<div class="ln" style="top:175.58px"><i class="c">-- ALTER TABLE JOB_HISTORY DISABLE ALL TRIGGERS;</i></div>
<div class="ln" style="top:187.42px"></div>
<div class="ln" style="top:199.26px"><b>INSERT</b> <b>INTO</b> JOB_HISTORY<i class="p">(</i> EMPLOYEE_ID<i class="p">,</i> START_DATE<i class="p">,</i> END_DATE<i class="p">,</i> JOB_ID<i class="p">,</i> DEPARTMENT_ID<i class="p">)</i></div>
<div class="ln" style="top:211.10px">  <b>VALUES</b><i class="p">(</i> <i class="n">1</i><i class="p">,</i> <b>TIMESTAMP</b> <i class="s">'0017-01-20 00:00:00'</i><i class="p">,</i> <b>TIMESTAMP</b> <i class="s">'2023-01-08 10:09:43'</i><i class="p">,</i> <i class="s">'AD_PRES'</i><i class="p">,</i> <i class="n">90</i><i class="p">);</i></div>
<div class="ln" style="top:222.94px"><b>INSERT</b> <b>INTO</b> JOB_HISTORY<i class="p">(</i> EMPLOYEE_ID<i class="p">,</i> START_DATE<i class="p">,</i> END_DATE<i class="p">,</i> JOB_ID<i class="p">,</i> DEPARTMENT_ID<i class="p">)</i></div>
<div class="ln" style="top:234.78px">  <b>VALUES</b><i class="p">(</i> <i class="n">1</i><i class="p">,</i> <b>TIMESTAMP</b> <i class="s">'2017-01-20 00:00:00'</i><i class="p">,</i> <b>TIMESTAMP</b> <i class="s">'2023-01-08 10:54:41'</i><i class="p">,</i> <i class="s">'AD_PRES'</i><i class="p">,</i> <i class="n">90</i><i class="p">);</i></div>
<div class="ln" style="top:246.62px"><b>INSERT</b> <b>INTO</b> JOB_HISTORY<i class="p">(</i> EMPLOYEE_ID<i class="p">,</i> START_DATE<i class="p">,</i> END_DATE<i class="p">,</i> JOB_ID<i class="p">,</i> DEPARTMENT_ID<i class="p">)</i></div>
<div class="ln" style="top:258.46px">  <b>VALUES</b><i class="p">(</i> <i class="n">102</i><i class="p">,</i> <b>TIMESTAMP</b> <i class="s">'2001-01-13 00:00:00'</i><i class="p">,</i> <b>TIMESTAMP</b> <i class="s">'2006-07-24 00:00:00'</i><i class="p">,</i> <i class="s">'IT_PROG'</i><i class="p">,</i> <i class="n">60</i><i class="p">);</i></div>
<div class="ln" style="top:270.30px"><b>INSERT</b> <b>INTO</b> JOB_HISTORY<i class="p">(</i> EMPLOYEE_ID<i class="p">,</i> START_DATE<i class="p">,</i> END_DATE<i class="p">,</i> JOB_ID<i class="p">,</i> DEPARTMENT_ID<i class="p">)</i></div>
<div class="ln" style="top:282.14px">  <b>VALUES</b><i class="p">(</i> <i class="n">101</i><i class="p">,</i> <b>TIMESTAMP</b> <i class="s">'1997-09-21 00:00:00'</i><i class="p">,</i> <b>TIMESTAMP</b> <i class="s">'2001-10-27 00:00:00'</i><i class="p">,</i> <i class="s">'AC_ACCOUNT'</i><i class="p">,</i> <i class="n">110</i><i class="p">);</i></div>
<div class="ln" style="top:293.98px"><b>INSERT</b> <b>INTO</b> JOB_HISTORY<i class="p">(</i> EMPLOYEE_ID<i class="p">,</i> START_DATE<i class="p">,</i> END_DATE<i class="p">,</i> JOB_ID<i class="p">,</i> DEPARTMENT_ID<i class="p">)</i></div>
<div class="ln" style="top:305.82px">  <b>VALUES</b><i class="p">(</i> <i class="n">101</i><i class="p">,</i> <b>TIMESTAMP</b> <i class="s">'2001-10-28 00:00:00'</i><i class="p">,</i> <b>TIMESTAMP</b> <i class="s">'2005-03-15 00:00:00'</i><i class="p">,</i> <i class="s">'AC_MGR'</i><i class="p">,</i> <i class="n">110</i><i class="p">);</i></div>
<div class="ln" style="top:317.66px"><b>INSERT</b> <b>INTO</b> JOB_HISTORY<i class="p">(</i> EMPLOYEE_ID<i class="p">,</i> START_DATE<i class="p">,</i> END_DATE<i class="p">,</i> JOB_ID<i class="p">,</i> DEPARTMENT_ID<i class="p">)</i></div>
<div class="ln" style="top:329.50px">  <b>VALUES</b><i class="p">(</i> <i class="n">201</i><i class="p">,</i> <b>TIMESTAMP</b> <i class="s">'2004-02-17 00:00:00'</i><i class="p">,</i> <b>TIMESTAMP</b> <i class="s">'2007-12-19 00:00:00'</i><i class="p">,</i> <i class="s">'MK_REP'</i><i class="p">,</i> <i class="n">20</i><i class="p">);</i></div>
<div class="ln" style="top:341.34px"><b>INSERT</b> <b>INTO</b> JOB_HISTORY<i class="p">(</i> EMPLOYEE_ID<i class="p">,</i> START_DATE<i class="p">,</i> END_DATE<i class="p">,</i> JOB_ID<i class="p">,</i> DEPARTMENT_ID<i class="p">)</i></div>
<div class="ln" style="top:353.18px">  <b>VALUES</b><i class="p">(</i> <i class="n">114</i><i class="p">,</i> <b>TIMESTAMP</b> <i class="s">'2006-03-24 00:00:00'</i><i class="p">,</i> <b>TIMESTAMP</b> <i class="s">'2007-12-31 00:00:00'</i><i class="p">,</i> <i class="s">'ST_CLERK'</i><i class="p">,</i> <i class="n">50</i><i class="p">);</i></div>
<div class="ln" style="top:365.02px"><b>INSERT</b> <b>INTO</b> JOB_HISTORY<i class="p">(</i> EMPLOYEE_ID<i class="p">,</i> START_DATE<i class="p">,</i> END_DATE<i class="p">,</i> JOB_ID<i class="p">,</i> DEPARTMENT_ID<i class="p">)</i></div>
<div class="ln" style="top:376.86px">  <b>VALUES</b><i class="p">(</i> <i class="n">122</i><i class="p">,</i> <b>TIMESTAMP</b> <i class="s">'2007-01-01 00:00:00'</i><i class="p">,</i> <b>TIMESTAMP</b> <i class="s">'2007-12-31 00:00:00'</i><i class="p">,</i> <i class="s">'ST_CLERK'</i><i class="p">,</i> <i class="n">50</i><i class="p">);</i></div>
<div class="ln" style="top:388.70px"><b>INSERT</b> <b>INTO</b> JOB_HISTORY<i class="p">(</i> EMPLOYEE_ID<i class="p">,</i> START_DATE<i class="p">,</i> END_DATE<i class="p">,</i> JOB_ID<i class="p">,</i> DEPARTMENT_ID<i class="p">)</i></div>
<div class="ln" style="top:400.54px">  <b>VALUES</b><i class="p">(</i> <i class="n">200</i><i class="p">,</i> <b>TIMESTAMP</b> <i class="s">'1995-09-17 00:00:00'</i><i class="p">,</i> <b>TIMESTAMP</b> <i class="s">'2001-06-17 00:00:00'</i><i class="p">,</i> <i class="s">'AD_ASST'</i><i class="p">,</i> <i class="n">90</i><i class="p">);</i></div>
<div class="ln" style="top:412.38px"><b>INSERT</b> <b>INTO</b> JOB_HISTORY<i class="p">(</i> EMPLOYEE_ID<i class="p">,</i> START_DATE<i class="p">,</i> END_DATE<i class="p">,</i> JOB_ID<i class="p">,</i> DEPARTMENT_ID<i class="p">)</i></div>
<div class="ln" style="top:424.22px">  <b>VALUES</b><i class="p">(</i> <i class="n">176</i><i class="p">,</i> <b>TIMESTAMP</b> <i class="s">'2006-03-24 00:00:00'</i><i class="p">,</i> <b>TIMESTAMP</b> <i class="s">'2006-12-31 00:00:00'</i><i class="p">,</i> <i class="s">'SA_REP'</i><i class="p">,</i> <i class="n">80</i><i class="p">);</i></div>
<div class="ln" style="top:436.06px"><b>INSERT</b> <b>INTO</b> JOB_HISTORY<i class="p">(</i> EMPLOYEE_ID<i class="p">,</i> START_DATE<i class="p">,</i> END_DATE<i class="p">,</i> JOB_ID<i class="p">,</i> DEPARTMENT_ID<i class="p">)</i></div>
<div class="ln" style="top:447.90px">  <b>VALUES</b><i class="p">(</i> <i class="n">176</i><i class="p">,</i> <b>TIMESTAMP</b> <i class="s">'2007-01-01 00:00:00'</i><i class="p">,</i> <b>TIMESTAMP</b> <i class="s">'2007-12-31 00:00:00'</i><i class="p">,</i> <i class="s">'SA_MAN'</i><i class="p">,</i> <i class="n">80</i><i class="p">);</i></div>
<div class="ln" style="top:459.74px"><b>INSERT</b> <b>INTO</b> JOB_HISTORY<i class="p">(</i> EMPLOYEE_ID<i class="p">,</i> START_DATE<i class="p">,</i> END_DATE<i class="p">,</i> JOB_ID<i class="p">,</i> DEPARTMENT_ID<i class="p">)</i></div>
<div class="ln" style="top:471.58px">  <b>VALUES</b><i class="p">(</i> <i class="n">200</i><i class="p">,</i> <b>TIMESTAMP</b> <i class="s">'2002-07-01 00:00:00'</i><i class="p">,</i> <b>TIMESTAMP</b> <i class="s">'2006-12-31 00:00:00'</i><i class="p">,</i> <i class="s">'AC_ACCOUNT'</i><i class="p">,</i> <i class="n">90</i><i class="p">);</i></div>
<div class="ln" style="top:483.42px"><b>COMMIT</b><i class="p">;</i></div>
<div class="ln" style="top:495.26px"><i class="c">-- ALTER TABLE JOB_HISTORY ENABLE ALL TRIGGERS;</i></div>
<div class="a" style="left:382px;top:527px;width:1px;height:1px;background:#777;box-shadow:2px 0 #777,4px 0 #777"></div>
<!-- status bar -->
<div class="a" style="left:0;top:543px;width:768px;height:2px;background:#c8c8c8"></div>
<div class="a dark" style="left:1px;top:532px;width:766px;height:11.6px;border-radius:0 0 3px 3px"></div>
<div class="sep" style="left:108.5px"></div>
<div class="sep" style="left:123px"></div>
<div class="sep" style="left:134.5px"></div>
<div class="sep" style="left:153px"></div>
<div class="sep" style="left:172.5px"></div>
<div class="sep" style="left:190.5px"></div>
<div class="sep" style="left:207.5px"></div>
<div class="sep" style="left:221px"></div>
<div class="sep" style="left:267px"></div>
<div class="sep" style="left:340px"></div>
<svg class="a" style="left:110px;top:533px" width="12" height="10" viewBox="0 0 12 10"><rect x="0.7" y="0.3" width="10.4" height="9.2" fill="#bfe4fb"/><rect x="0.7" y="0.3" width="10.4" height="1.3" fill="#2e8ee0"/><path d="M1.2 9 L10.6 1.8 V9Z" fill="#e6f4fd"/><rect x="0.7" y="0.3" width="10.4" height="9.2" fill="none" stroke="#7ab8e6" stroke-width="0.5"/></svg>
<div class="st" style="left:136.8px">CAPS</div>
<div class="st" style="left:155.6px;color:#f4f4f4">NUM</div>
<div class="st" style="left:174.8px">SCRL</div>
<div class="st" style="left:194.6px">INS</div>
<div class="st" style="left:213.6px;color:#e0e0e0">*</div>
<div class="st" style="left:237.8px;color:#f4f4f4">ANSI</div>
<div class="st" style="left:299.6px;color:#f4f4f4">1:1</div>
<svg class="a" style="left:757px;top:535px" width="9" height="8" viewBox="0 0 9 8"><g fill="#9a9a9a"><rect x="6" y="1" width="1" height="1"/><rect x="6" y="3.5" width="1" height="1"/><rect x="3.5" y="3.5" width="1" height="1"/><rect x="6" y="6" width="1" height="1"/><rect x="3.5" y="6" width="1" height="1"/><rect x="1" y="6" width="1" height="1"/></g></svg>
<div class="a" style="left:767px;top:6px;width:1px;height:539px;background:#d0d0d0"></div>
<div class="a" style="left:0;top:6px;width:1px;height:539px;background:#c4c4c4"></div>
<div class="a" style="left:0;top:0;width:768px;height:1px;background:#b4b4b4"></div>
<div class="t" style="left:13.88px;top:4.26px;font-size:8.0px;font-weight:400;color:#f2f2f2;transform:scaleX(0.9152);transform-origin:0 0">SQL Editor - JOB_HISTORY.SQL in C:\temp\</div>
<div class="t" style="left:4.56px;top:19.68px;font-size:7.5px;font-weight:400;color:#f0f0f0;-webkit-text-stroke:0.12px currentColor;transform:scaleX(0.8535);transform-origin:0 0">File</div>
<div class="t" style="left:22.06px;top:19.68px;font-size:7.5px;font-weight:400;color:#f0f0f0;-webkit-text-stroke:0.12px currentColor;transform:scaleX(0.9280);transform-origin:0 0">View</div>
<div class="t" style="left:43.75px;top:19.68px;font-size:7.5px;font-weight:400;color:#f0f0f0;-webkit-text-stroke:0.12px currentColor;transform:scaleX(0.8868);transform-origin:0 0">Database</div>
<div class="t" style="left:79.62px;top:19.68px;font-size:7.5px;font-weight:400;color:#f0f0f0;-webkit-text-stroke:0.12px currentColor;transform:scaleX(0.9289);transform-origin:0 0">Query</div>
<div class="t" style="left:105.56px;top:19.68px;font-size:7.5px;font-weight:400;color:#f0f0f0;-webkit-text-stroke:0.12px currentColor;transform:scaleX(0.8711);transform-origin:0 0">Edit</div>
<div class="t" style="left:124.12px;top:19.68px;font-size:7.5px;font-weight:400;color:#f0f0f0;-webkit-text-stroke:0.12px currentColor;transform:scaleX(0.8800);transform-origin:0 0">Search</div>
<div class="t" style="left:152.06px;top:19.68px;font-size:7.5px;font-weight:400;color:#f0f0f0;-webkit-text-stroke:0.12px currentColor;transform:scaleX(0.9144);transform-origin:0 0">Format</div>
<div class="t" style="left:181.62px;top:19.68px;font-size:7.5px;font-weight:400;color:#f0f0f0;-webkit-text-stroke:0.12px currentColor;transform:scaleX(0.9423);transform-origin:0 0">Options</div>
<div class="t" style="left:213.56px;top:19.68px;font-size:7.5px;font-weight:400;color:#f0f0f0;-webkit-text-stroke:0.12px currentColor;transform:scaleX(0.9604);transform-origin:0 0">Help</div>
<div class="t" style="left:88.38px;top:47.58px;font-size:7.1px;font-weight:400;color:#1e1e1e;-webkit-text-stroke:0.12px currentColor;transform:scaleX(0.8872);transform-origin:0 0">Dieser PC</div>
<div class="t" style="left:136.44px;top:47.58px;font-size:7.1px;font-weight:400;color:#1e1e1e;-webkit-text-stroke:0.12px currentColor;transform:scaleX(0.9594);transform-origin:0 0">Windows (C:)</div>
<div class="t" style="left:196.00px;top:47.58px;font-size:7.1px;font-weight:400;color:#1e1e1e;-webkit-text-stroke:0.3px currentColor;transform:scaleX(0.9429);transform-origin:0 0">temp</div>
<div class="t" style="left:648.38px;top:45.56px;font-size:6.6px;font-weight:400;color:#444444;transform:scaleX(1.0359);transform-origin:0 0">&quot;temp&quot; durchsuchen</div>
<div class="t" style="left:7.00px;top:70.70px;font-size:6.8px;font-weight:700;color:#2f7fd8;-webkit-text-stroke:0.18px currentColor;transform:scaleX(0.8800);transform-origin:0 0">SQL files</div>
<div class="t" style="left:163.56px;top:70.76px;font-size:6.8px;font-weight:700;color:#2f7fd8;-webkit-text-stroke:0.18px currentColor;transform:scaleX(0.8611);transform-origin:0 0">JOB_HISTORY.SQL</div>
<div class="t" style="left:687.06px;top:70.76px;font-size:6.8px;font-weight:700;color:#2f7fd8;-webkit-text-stroke:0.05px currentColor;transform:scaleX(0.9241);transform-origin:0 0">23.08.2023 07:50:28</div>
<div class="t" style="left:27.12px;top:83.68px;font-size:7.5px;font-weight:400;color:#1c1c1c;-webkit-text-stroke:0.12px currentColor;transform:scaleX(0.8157);transform-origin:0 0">JOB_HISTORY.SQL</div>
<div class="t" style="left:37.12px;top:502.70px;font-size:8.0px;font-weight:400;color:#4c4c4c;-webkit-text-stroke:0.12px currentColor;transform:scaleX(0.8279);transform-origin:0 0">Batch Execute Selected Files</div>
<div class="t" style="left:137.00px;top:533.04px;font-size:7.0px;font-weight:400;color:#8a8a8a;transform:scaleX(0.7975);transform-origin:0 0">CAPS</div>
<div class="t" style="left:155.38px;top:533.04px;font-size:7.0px;font-weight:400;color:#e2e2e2;transform:scaleX(0.9803);transform-origin:0 0">NUM</div>
<div class="t" style="left:175.06px;top:533.04px;font-size:7.0px;font-weight:400;color:#8a8a8a;transform:scaleX(0.7912);transform-origin:0 0">SCRL</div>
<div class="t" style="left:195.06px;top:533.04px;font-size:7.0px;font-weight:400;color:#8a8a8a;transform:scaleX(0.8515);transform-origin:0 0">INS</div>
<div class="t" style="left:238.06px;top:533.04px;font-size:7.0px;font-weight:400;color:#e2e2e2;transform:scaleX(0.8631);transform-origin:0 0">ANSI</div>
<div class="t" style="left:300.12px;top:533.04px;font-size:7.0px;font-weight:400;color:#e2e2e2;transform:scaleX(0.9131);transform-origin:0 0">1:1</div>
<div class="a" style="left:4.5px;top:27.2px;width:3.5px;height:0.8px;background:#d8d8d8"></div>
<div class="a" style="left:22px;top:27.2px;width:4.5px;height:0.8px;background:#d8d8d8"></div>
<div class="a" style="left:43.8px;top:27.2px;width:4.7px;height:0.8px;background:#d8d8d8"></div>
<div class="a" style="left:105.5px;top:27.2px;width:3.5px;height:0.8px;background:#d8d8d8"></div>
<div class="a" style="left:124px;top:27.2px;width:4.5px;height:0.8px;background:#d8d8d8"></div>
<div class="a" style="left:170.5px;top:27.2px;width:3.5px;height:0.8px;background:#d8d8d8"></div>
<div class="a" style="left:181.5px;top:27.2px;width:5.5px;height:0.8px;background:#d8d8d8"></div>
<div class="a" style="left:213.5px;top:27.2px;width:5.0px;height:0.8px;background:#d8d8d8"></div>
</body></html>
